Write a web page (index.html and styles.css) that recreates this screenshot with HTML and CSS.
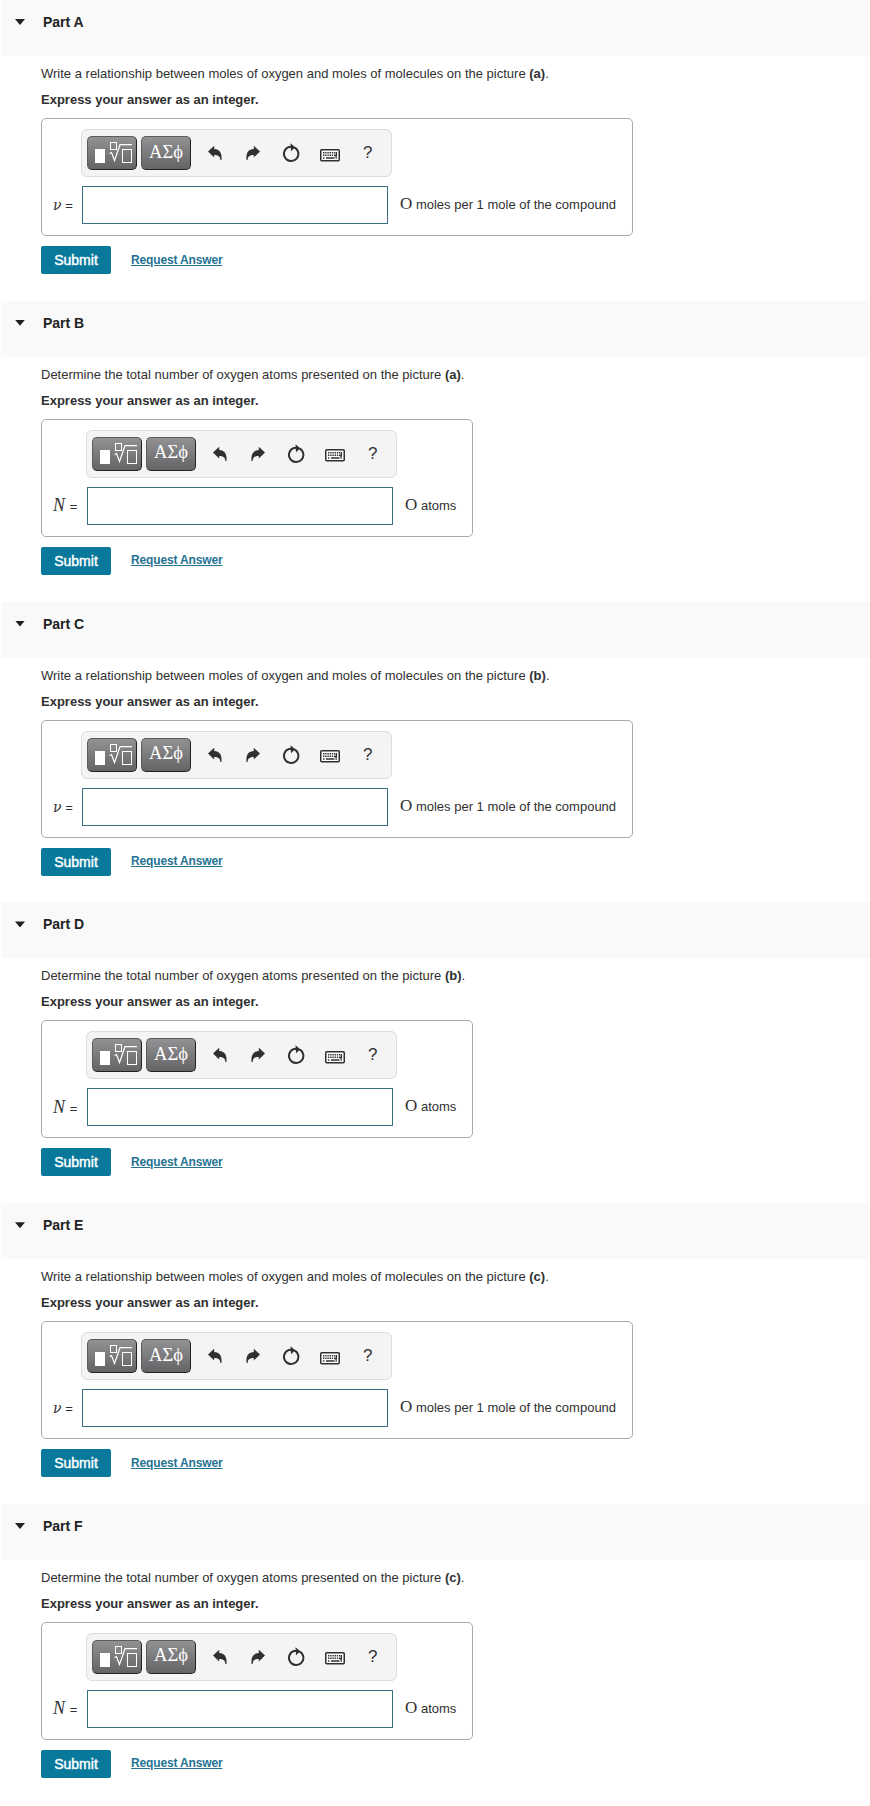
FILE: index.html
```
<!DOCTYPE html>
<html lang="en">
<head>
  <meta charset="UTF-8">
  <meta name="viewport" content="width=device-width, initial-scale=1.0">
  <title>Moles and atoms</title>
  <link rel="stylesheet" href="styles.css">
</head>
<body>
  <main id="parts"></main>

  <template id="part-template">
    <section class="part">
      <header class="part-header">
        <span class="arrow"></span>
        <h2></h2>
      </header>
      <div class="part-body">
        <p class="question"><span class="text"></span> <b></b>.</p>
        <p class="instruction">Express your answer as an integer.</p>
        <div class="answer-box">
          <div class="toolbar">
            <button class="tool-dark" aria-label="Templates">
              <svg width="48" height="32" viewBox="0 0 48 32">
                <rect x="7" y="12" width="10" height="14" fill="#fff"/>
                <g fill="none" stroke="#fff">
                  <rect x="22.5" y="5.5" width="6" height="7"/>
                  <path d="M21.500 16.500l2-1 3 8L32 7.700H44" stroke-width="1.200"/>
                  <rect x="34.5" y="12.500" width="9" height="13"/>
                </g>
              </svg>
            </button>
            <button class="tool-dark symbols">ΑΣϕ</button>
            <button class="tool" aria-label="Undo">
              <svg width="16" height="18" viewBox="0 0 16 18"><path d="M1 7.500L7.200 1.800v3.200c5.300.2 8 3.800 7.300 11h-1.100c-.2-3.600-2-5-6.200-5v2.500z"/></svg>
            </button>
            <button class="tool" aria-label="Redo">
              <svg width="16" height="18" viewBox="0 0 16 18"><path d="M15 7.500L8.800 1.800V5C3.500 5.200.8 8.800 1.500 16h1.100c.2-3.600 2-5 6.200-5v2.500z"/></svg>
            </button>
            <button class="tool" aria-label="Reset">
              <svg width="18" height="20" viewBox="0 0 18 20"><path d="M12.300 4.300a7.200 7.200 0 1 1-5.200-.4l3-.2" fill="none" stroke="#303030" stroke-width="2"/><path d="M8.500.300l4.700 3.900-4.200 4z"/></svg>
            </button>
            <button class="tool" aria-label="Keyboard shortcuts">
              <svg class="keyboard" width="20" height="13" viewBox="0 0 20 13">
                <rect x=".75" y=".75" width="18.500" height="11" rx="1" fill="#fff" stroke="#303030" stroke-width="1.500"/>
                <path d="M3 3.700h12M3 6.200h12M3 9h2M15.500 9h1.500" stroke="#303030" stroke-width="1.500" stroke-dasharray="1.400 .8"/>
                <path d="M6 9h8.500M16.300 3v4h-1.500" fill="none" stroke="#303030" stroke-width="1.500"/>
              </svg>
            </button>
            <button class="tool help">?</button>
          </div>
          <label class="variable"><i></i> =</label>
          <input type="text">
          <div class="unit"><span class="oxygen">O</span> <span class="unit-text"></span></div>
        </div>
        <div class="actions">
          <button class="submit">Submit</button>
          <a href="#">Request Answer</a>
        </div>
      </div>
    </section>
  </template>

  <script>
    const template = document.getElementById('part-template');
    const container = document.getElementById('parts');
    const moles = {
      className: 'moles',
      question: 'Write a relationship between moles of oxygen and moles of molecules on the picture',
      variable: 'ν',
      unit: 'moles per 1 mole of the compound'
    };
    const atoms = {
      className: 'atoms',
      question: 'Determine the total number of oxygen atoms presented on the picture',
      variable: 'N',
      unit: 'atoms'
    };
    const parts = [['A', moles, 'a'], ['B', atoms, 'a'], ['C', moles, 'b'], ['D', atoms, 'b'], ['E', moles, 'c'], ['F', atoms, 'c']];

    parts.forEach(([letter, type, picture]) => {
      const part = template.content.cloneNode(true);
      part.querySelector('.part').classList.add(type.className);
      part.querySelector('h2').textContent = 'Part ' + letter;
      part.querySelector('.text').textContent = type.question;
      part.querySelector('b').textContent = '(' + picture + ')';
      part.querySelector('.variable i').textContent = type.variable;
      part.querySelector('.unit-text').textContent = type.unit;
      container.appendChild(part);
    });
  </script>
</body>
</html>
```
FILE: styles.css
```
* {
  box-sizing: border-box;
}

body {
  margin: 0;
  background: #fff;
  color: #303030;
  font-family: "Liberation Sans", Arial, sans-serif;
  font-size: 13px;
  overflow: hidden;
}

button {
  border: 0;
  padding: 0;
  background: none;
  color: inherit;
  font-family: inherit;
}

.part {
  height: 300.8px;
}

.part-header {
  display: flex;
  align-items: center;
  height: 56px;
  margin-left: 1px;
  padding: 0 0 12px 14px;
  background: #f9f9f9;
}

.arrow {
  width: 10px;
  height: 6px;
  background: #202020;
  clip-path: polygon(0 0, 100% 0, 50% 100%);
}

h2 {
  margin: 0 0 0 18px;
  color: #222;
  font-size: 14px;
  line-height: 20px;
}

.part-body {
  padding: 8px 0 0 41px;
}

p {
  margin: 0;
  line-height: 20px;
}

.instruction {
  margin: 6px 0 8px;
  font-weight: bold;
}

.answer-box {
  display: grid;
  grid-template-columns: 29px 306px auto;
  grid-template-rows: 48px 38px;
  row-gap: 9px;
  width: 592px;
  height: 118px;
  padding: 10px 0 0 11px;
  border: 1px solid #aaa;
  border-radius: 5px;
}

.atoms .answer-box {
  grid-template-columns: 34px 306px auto;
  width: 432px;
}

.toolbar {
  grid-column: 2;
  display: flex;
  align-items: center;
  width: 311px;
  margin-left: -1px;
  padding-left: 5px;
  border: 1px solid #dcdcdc;
  border-radius: 6px;
  background: #f4f4f4;
}

.tool-dark {
  width: 50px;
  height: 34px;
  margin-right: 4px;
  border: 1px solid #5b5b5d;
  border-right-color: #222;
  border-bottom-color: #222;
  border-radius: 5px;
  background: linear-gradient(#929295, #646466);
  color: #fff;
}

.tool-dark svg {
  display: block;
}

.symbols {
  margin-right: 5px;
  padding-bottom: 2px;
  font-family: "Liberation Serif", serif;
  font-size: 18.5px;
}

.tool {
  display: flex;
  align-items: center;
  justify-content: center;
  width: 38.2px;
  height: 34px;
}

.tool svg {
  fill: #303030;
}

.tool .keyboard {
  margin-top: 4px;
}

.help {
  font-size: 17px;
}

.variable {
  grid-column: 1;
  align-self: center;
  white-space: nowrap;
}

.variable i {
  font-family: "Liberation Serif", serif;
  font-size: 18px;
}

.moles .variable i {
  font-family: "DejaVu Serif", serif;
  font-size: 14px;
}

.atoms .variable i {
  margin-right: 1px;
}

input {
  width: 306px;
  height: 38px;
  border: 1px solid #3b6f83;
  border-radius: 0;
  background: #fff;
}

.unit {
  align-self: center;
  padding: 0 0 2px 12px;
  white-space: nowrap;
}

.oxygen {
  font-family: "Liberation Serif", serif;
  font-size: 17px;
}

.actions {
  display: flex;
  align-items: center;
  margin-top: 10px;
}

.submit {
  width: 70px;
  height: 28px;
  border-radius: 2px;
  background: #08799b;
  color: #fff;
  font-size: 14px;
  -webkit-text-stroke: 0.4px #fff;
}

.actions a {
  margin-left: 20px;
  padding-bottom: 1px;
  color: #267394;
  font-size: 12px;
  font-weight: bold;
  letter-spacing: -0.15px;
}
```
